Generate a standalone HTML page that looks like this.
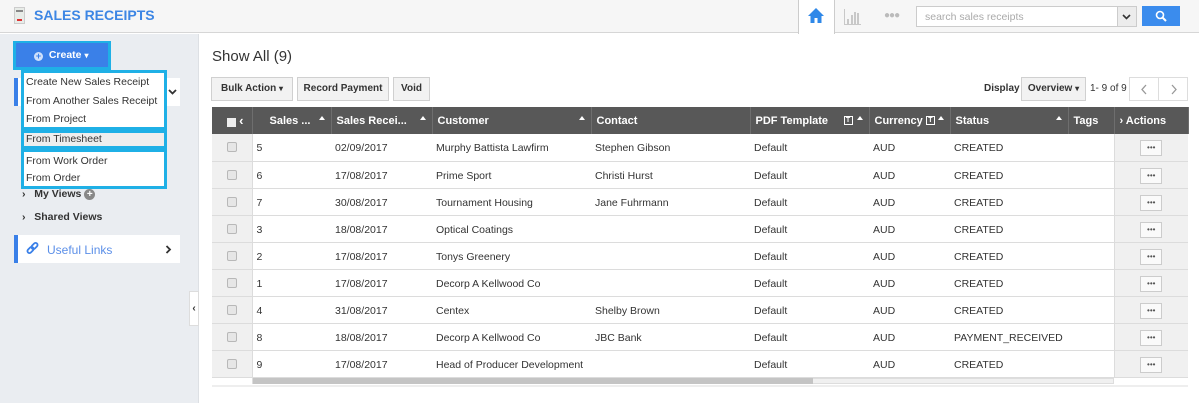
<!DOCTYPE html>
<html><head><meta charset="utf-8"><style>
*{box-sizing:border-box;margin:0;padding:0}
body{width:1199px;height:403px;overflow:hidden;background:#fff;font-family:"Liberation Sans",Arial,sans-serif;font-size:11px;color:#333;position:relative}
.abs{position:absolute}
#hdr{left:0;top:0;width:1199px;height:33px;background:#f6f6f6;border-bottom:1px solid #d6d6d6}
#side{left:0;top:34px;width:199px;height:369px;background:#eaedf1;border-right:1px solid #dde0e4}
.btn{position:absolute;background:#f2f2f2;border:1px solid #d0d0d0;font-weight:bold;font-size:10px;color:#333;text-align:center;line-height:22px;height:24px;white-space:nowrap}
table{position:absolute;left:212px;top:107px;width:976px;border-collapse:collapse;table-layout:fixed}
th{background:#585858;color:#fff;height:27px;text-align:left;font-size:11px;padding-left:5px;border-right:1px solid #6e6e6e;white-space:nowrap;overflow:hidden;position:relative}
td{height:27px;border-bottom:1px solid #dcdcdc;padding-left:4px;padding-top:2px;font-size:10.5px;white-space:nowrap}
td.c{background:#f0f0f0;border-right:1px solid #dcdcdc;text-align:center;padding:0}
td.a{background:#f0f0f0;border-left:1px solid #dcdcdc;text-align:center;padding:2px 0 0}
.cb{display:inline-block;width:10px;height:10px;border:1px solid #b8b8b8;border-radius:2px;background:#e6e6e6;vertical-align:middle}
.dots{display:inline-block;width:22px;height:16px;border:1px solid #ccc;background:#fafafa;font-size:8px;line-height:13px;color:#555;vertical-align:middle;font-style:normal}
.up{position:absolute;right:6px;top:9px;width:0;height:0;border-left:3px solid transparent;border-right:3px solid transparent;border-bottom:4px solid #fff}
.ft{display:inline-block;width:9px;height:9px;border:1px solid #fff;font-size:7px;line-height:7px;text-align:center;vertical-align:middle}
.dd{position:absolute;left:21px;width:146px;background:#fff;border:3px solid #1fb0e6;font-size:10.5px;color:#333;white-space:nowrap;overflow:hidden}
.dd div{height:19px;line-height:19px;padding-left:2px}
</style></head><body>
<div id="hdr" class="abs"></div>
<div class="abs" style="left:14px;top:7px;width:11px;height:17px;background:#e8ece8;border:1px solid #ccc"></div>
<div class="abs" style="left:16px;top:10px;width:7px;height:2px;background:#888"></div>
<div class="abs" style="left:17px;top:19px;width:5px;height:2px;background:#d33"></div>
<div class="abs" style="left:34px;top:7px;font-size:14px;font-weight:bold;color:#3d86e4">SALES RECEIPTS</div>
<div class="abs" style="left:798px;top:0;width:37px;height:34px;background:#fff;border-left:1px solid #ccc;border-right:1px solid #ccc"></div>
<svg class="abs" style="left:807px;top:7px" width="18" height="17" viewBox="0 0 18 17"><path d="M9 1 L1 9 H3.5 V16 H7.5 V11 H10.5 V16 H14.5 V9 H17 Z" fill="#2f88e8"/></svg>
<svg class="abs" style="left:843px;top:9px" width="18" height="16"><g fill="#c8c8c8"><rect x="1" y="0" width="1" height="16"/><rect x="1" y="15" width="17" height="1"/><rect x="4" y="10" width="2" height="5"/><rect x="8" y="6" width="2" height="9"/><rect x="11" y="3" width="2" height="12"/><rect x="14" y="4" width="2" height="11"/></g></svg>
<div class="abs" style="left:884px;top:10px;color:#bbb;font-size:10px;letter-spacing:-1px">●●●</div>
<div class="abs" style="left:916px;top:6px;width:221px;height:21px;background:#fff;border:1px solid #ccc"></div>
<div class="abs" style="left:925px;top:11px;color:#aaa;font-size:10.5px">search sales receipts</div>
<div class="abs" style="left:1117px;top:7px;width:19px;height:19px;background:#ececec;border-left:1px solid #ccc"></div>
<svg class="abs" style="left:1122px;top:13px" width="9" height="8"><path d="M1 2 L4.5 5.5 L8 2" stroke="#333" stroke-width="1.6" fill="none"/></svg>
<div class="abs" style="left:1142px;top:6px;width:38px;height:20px;background:#3b8ced"></div>
<svg class="abs" style="left:1155px;top:10px" width="12" height="12"><circle cx="5" cy="5" r="3.5" stroke="#fff" stroke-width="1.6" fill="none"/><path d="M7.5 7.5 L11 11" stroke="#fff" stroke-width="2"/></svg>

<div id="side" class="abs"></div>
<div class="abs" style="left:13px;top:41px;width:98px;height:29px;background:#1fb0e6"></div>
<div class="abs" style="left:16px;top:43px;width:92px;height:24px;background:#3a80e8;color:#fff;font-weight:bold;font-size:10.5px;line-height:24px;padding-left:18px">
<span style="display:inline-block;width:9px;height:9px;border-radius:50%;background:#cfe0fb;color:#3a80e8;font-size:9px;line-height:9px;text-align:center;vertical-align:-1px">+</span>&nbsp; Create <span style="font-size:8px">▾</span></div>
<div class="abs" style="left:14px;top:78px;width:166px;height:28px;background:#fff;border-left:4px solid #3a80e8"></div>
<svg class="abs" style="left:168px;top:89px" width="9" height="7"><path d="M1 1 L4.5 4.5 L8 1" stroke="#333" stroke-width="1.8" fill="none"/></svg>
<div class="dd" style="top:70px;height:60px"><div>Create New Sales Receipt</div><div>From Another Sales Receipt</div><div style="height:16px;line-height:16px">From Project</div></div>
<div class="dd" style="top:130px;height:19px;background:#eee"><div style="height:13px;line-height:13px">From Timesheet</div></div>
<div class="dd" style="top:149px;height:40px"><div>From Work Order</div><div style="height:15px;line-height:15px">From Order</div></div>
<div class="abs" style="left:22px;top:188px;font-weight:bold;font-size:10.5px">›&nbsp;&nbsp; My Views <span style="display:inline-block;width:11px;height:11px;border-radius:50%;background:#888;color:#fff;font-size:10px;line-height:11px;text-align:center">+</span></div>
<div class="abs" style="left:22px;top:211px;font-weight:bold;font-size:10.5px">›&nbsp;&nbsp; Shared Views</div>
<div class="abs" style="left:14px;top:235px;width:166px;height:28px;background:#fff;border-left:4px solid #3a80e8"></div>
<svg class="abs" style="left:26px;top:242px" width="13" height="13"><g stroke="#3a80e8" stroke-width="1.8" fill="none"><rect x="1" y="6" width="7" height="4" rx="2" transform="rotate(-45 4.5 8)"/><rect x="5" y="2" width="7" height="4" rx="2" transform="rotate(-45 8.5 4)"/></g></svg>
<div class="abs" style="left:47px;top:243px;color:#5b8fe8;font-size:12px">Useful Links</div>
<svg class="abs" style="left:165px;top:245px" width="7" height="9"><path d="M1.5 1 L5 4.5 L1.5 8" stroke="#333" stroke-width="1.8" fill="none"/></svg>
<div class="abs" style="left:189px;top:291px;width:10px;height:35px;background:#fff;border:1px solid #ddd;font-size:10px;font-weight:bold;line-height:33px;text-align:center">‹</div>

<div class="abs" style="left:212px;top:48px;font-size:15px;color:#333">Show All (9)</div>
<div class="btn" style="left:211px;top:77px;width:82px">Bulk Action <span style="font-size:8px">▾</span></div>
<div class="btn" style="left:297px;top:77px;width:92px">Record Payment</div>
<div class="btn" style="left:393px;top:77px;width:37px">Void</div>
<div class="abs" style="left:984px;top:83px;font-weight:bold;font-size:10px">Display</div>
<div class="btn" style="left:1021px;top:77px;width:65px">Overview <span style="font-size:8px">▾</span></div>
<div class="abs" style="left:1090px;top:83px;font-size:10px">1- 9 of 9</div>
<div class="abs" style="left:1129px;top:77px;width:59px;height:24px;border:1px solid #ddd;background:#fff"></div>
<div class="abs" style="left:1158px;top:77px;width:1px;height:24px;background:#ddd"></div>
<svg class="abs" style="left:1140px;top:84px" width="8" height="11"><path d="M6 1 L2 5.5 L6 10" stroke="#999" stroke-width="1.3" fill="none"/></svg>
<svg class="abs" style="left:1170px;top:84px" width="8" height="11"><path d="M2 1 L6 5.5 L2 10" stroke="#999" stroke-width="1.3" fill="none"/></svg>

<table>
<colgroup><col style="width:40px"><col style="width:79px"><col style="width:101px"><col style="width:159px"><col style="width:159px"><col style="width:119px"><col style="width:81px"><col style="width:118px"><col style="width:46px"><col style="width:74px"></colgroup>
<tr><th style="padding-left:15px"><span style="display:inline-block;width:9px;height:9px;background:#eee;vertical-align:middle"></span> <b style="font-size:13px">‹</b></th><th style="padding-left:17px">Sales ...<i class="up"></i></th><th>Sales Recei...<i class="up"></i></th><th>Customer<i class="up"></i></th><th>Contact</th><th>PDF Template <span class="ft" style="position:absolute;right:16px;top:9px">T</span><i class="up"></i></th><th>Currency <span class="ft">T</span><i class="up"></i></th><th>Status<i class="up"></i></th><th>Tags</th><th>› Actions</th></tr>
<tr><td class="c"><i class="cb"></i></td><td>5</td><td>02/09/2017</td><td>Murphy Battista Lawfirm</td><td>Stephen Gibson</td><td>Default</td><td>AUD</td><td>CREATED</td><td></td><td class="a"><i class="dots">•••</i></td></tr>
<tr><td class="c"><i class="cb"></i></td><td>6</td><td>17/08/2017</td><td>Prime Sport</td><td>Christi Hurst</td><td>Default</td><td>AUD</td><td>CREATED</td><td></td><td class="a"><i class="dots">•••</i></td></tr>
<tr><td class="c"><i class="cb"></i></td><td>7</td><td>30/08/2017</td><td>Tournament Housing</td><td>Jane Fuhrmann</td><td>Default</td><td>AUD</td><td>CREATED</td><td></td><td class="a"><i class="dots">•••</i></td></tr>
<tr><td class="c"><i class="cb"></i></td><td>3</td><td>18/08/2017</td><td>Optical Coatings</td><td></td><td>Default</td><td>AUD</td><td>CREATED</td><td></td><td class="a"><i class="dots">•••</i></td></tr>
<tr><td class="c"><i class="cb"></i></td><td>2</td><td>17/08/2017</td><td>Tonys Greenery</td><td></td><td>Default</td><td>AUD</td><td>CREATED</td><td></td><td class="a"><i class="dots">•••</i></td></tr>
<tr><td class="c"><i class="cb"></i></td><td>1</td><td>17/08/2017</td><td>Decorp A Kellwood Co</td><td></td><td>Default</td><td>AUD</td><td>CREATED</td><td></td><td class="a"><i class="dots">•••</i></td></tr>
<tr><td class="c"><i class="cb"></i></td><td>4</td><td>31/08/2017</td><td>Centex</td><td>Shelby Brown</td><td>Default</td><td>AUD</td><td>CREATED</td><td></td><td class="a"><i class="dots">•••</i></td></tr>
<tr><td class="c"><i class="cb"></i></td><td>8</td><td>18/08/2017</td><td>Decorp A Kellwood Co</td><td>JBC Bank</td><td>Default</td><td>AUD</td><td>PAYMENT_RECEIVED</td><td></td><td class="a"><i class="dots">•••</i></td></tr>
<tr><td class="c"><i class="cb"></i></td><td>9</td><td>17/08/2017</td><td>Head of Producer Development</td><td></td><td>Default</td><td>AUD</td><td>CREATED</td><td></td><td class="a"><i class="dots">•••</i></td></tr>
</table>
<div class="abs" style="left:252px;top:378px;width:862px;height:6px;background:#f0f0f0;border:1px solid #ddd"></div>
<div class="abs" style="left:253px;top:378px;width:560px;height:6px;background:#c4c4c4"></div>
<div class="abs" style="left:212px;top:385px;width:976px;height:2px;background:#eee"></div>
</body></html>
